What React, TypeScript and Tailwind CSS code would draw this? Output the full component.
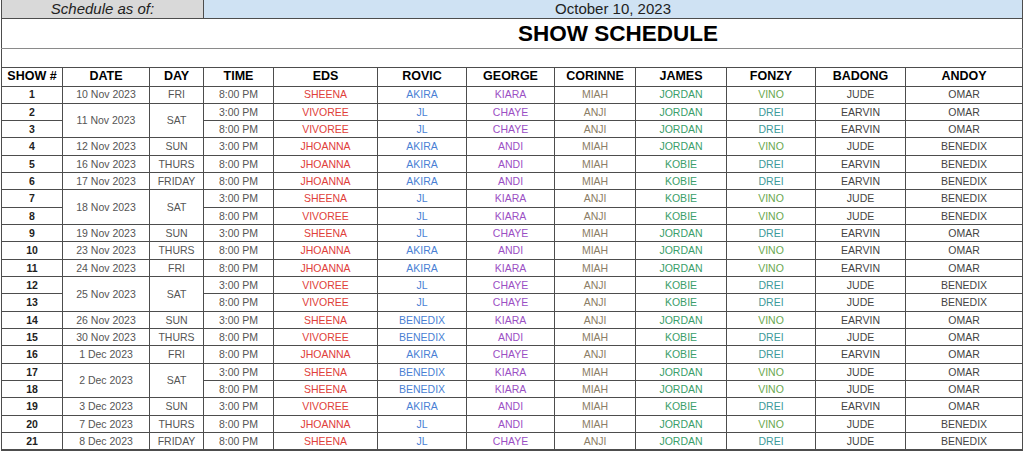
import React from "react";

type Row = {
  n: number;
  date?: string;
  day?: string;
  span?: number;
  time: string;
  eds: string;
  rovic: string;
  george: string;
  corinne: string;
  james: string;
  fonzy: string;
  badong: string;
  andoy: string;
};

const r = (
  n: number,
  date: string | undefined,
  day: string | undefined,
  span: number | undefined,
  time: string,
  eds: string,
  rovic: string,
  george: string,
  corinne: string,
  james: string,
  fonzy: string,
  badong: string,
  andoy: string
): Row => ({ n, date, day, span, time, eds, rovic, george, corinne, james, fonzy, badong, andoy });

const rows: Row[] = [
  r(1, "10 Nov 2023", "FRI", 1, "8:00 PM", "SHEENA", "AKIRA", "KIARA", "MIAH", "JORDAN", "VINO", "JUDE", "OMAR"),
  r(2, "11 Nov 2023", "SAT", 2, "3:00 PM", "VIVOREE", "JL", "CHAYE", "ANJI", "JORDAN", "DREI", "EARVIN", "OMAR"),
  r(3, undefined, undefined, undefined, "8:00 PM", "VIVOREE", "JL", "CHAYE", "ANJI", "JORDAN", "DREI", "EARVIN", "OMAR"),
  r(4, "12 Nov 2023", "SUN", 1, "3:00 PM", "JHOANNA", "AKIRA", "ANDI", "MIAH", "JORDAN", "VINO", "JUDE", "BENEDIX"),
  r(5, "16 Nov 2023", "THURS", 1, "8:00 PM", "JHOANNA", "AKIRA", "ANDI", "MIAH", "KOBIE", "DREI", "EARVIN", "BENEDIX"),
  r(6, "17 Nov 2023", "FRIDAY", 1, "8:00 PM", "JHOANNA", "AKIRA", "ANDI", "MIAH", "KOBIE", "DREI", "EARVIN", "BENEDIX"),
  r(7, "18 Nov 2023", "SAT", 2, "3:00 PM", "SHEENA", "JL", "KIARA", "ANJI", "KOBIE", "VINO", "JUDE", "BENEDIX"),
  r(8, undefined, undefined, undefined, "8:00 PM", "VIVOREE", "JL", "KIARA", "ANJI", "KOBIE", "VINO", "JUDE", "BENEDIX"),
  r(9, "19 Nov 2023", "SUN", 1, "3:00 PM", "SHEENA", "JL", "CHAYE", "MIAH", "JORDAN", "DREI", "EARVIN", "OMAR"),
  r(10, "23 Nov 2023", "THURS", 1, "8:00 PM", "JHOANNA", "AKIRA", "ANDI", "MIAH", "JORDAN", "VINO", "EARVIN", "OMAR"),
  r(11, "24 Nov 2023", "FRI", 1, "8:00 PM", "JHOANNA", "AKIRA", "KIARA", "MIAH", "JORDAN", "VINO", "EARVIN", "OMAR"),
  r(12, "25 Nov 2023", "SAT", 2, "3:00 PM", "VIVOREE", "JL", "CHAYE", "ANJI", "KOBIE", "DREI", "JUDE", "BENEDIX"),
  r(13, undefined, undefined, undefined, "8:00 PM", "VIVOREE", "JL", "CHAYE", "ANJI", "KOBIE", "DREI", "JUDE", "BENEDIX"),
  r(14, "26 Nov 2023", "SUN", 1, "3:00 PM", "SHEENA", "BENEDIX", "KIARA", "ANJI", "JORDAN", "VINO", "EARVIN", "OMAR"),
  r(15, "30 Nov 2023", "THURS", 1, "8:00 PM", "VIVOREE", "BENEDIX", "ANDI", "MIAH", "KOBIE", "DREI", "JUDE", "OMAR"),
  r(16, "1 Dec 2023", "FRI", 1, "8:00 PM", "JHOANNA", "AKIRA", "CHAYE", "ANJI", "KOBIE", "DREI", "EARVIN", "OMAR"),
  r(17, "2 Dec 2023", "SAT", 2, "3:00 PM", "SHEENA", "BENEDIX", "KIARA", "MIAH", "JORDAN", "VINO", "JUDE", "OMAR"),
  r(18, undefined, undefined, undefined, "8:00 PM", "SHEENA", "BENEDIX", "KIARA", "MIAH", "JORDAN", "VINO", "JUDE", "OMAR"),
  r(19, "3 Dec 2023", "SUN", 1, "3:00 PM", "VIVOREE", "AKIRA", "ANDI", "MIAH", "KOBIE", "DREI", "EARVIN", "OMAR"),
  r(20, "7 Dec 2023", "THURS", 1, "8:00 PM", "JHOANNA", "JL", "ANDI", "MIAH", "JORDAN", "VINO", "JUDE", "BENEDIX"),
  r(21, "8 Dec 2023", "FRIDAY", 1, "8:00 PM", "SHEENA", "JL", "CHAYE", "ANJI", "JORDAN", "DREI", "JUDE", "BENEDIX"),
];

const cell = "border border-[#4d4d4d] p-0 text-center align-middle leading-none whitespace-nowrap overflow-hidden";
const data = cell + " text-[10.5px]";
const head = cell + " text-[12.5px] font-bold text-black";

export default function App() {
  return (
    <div className="w-[1024px] h-[451px] overflow-hidden bg-white font-['Liberation_Sans',Arial,sans-serif]">
      <table className="ml-px border-collapse table-fixed w-[1021px] border-b-2 border-[#4d4d4d]">
        <colgroup>
          <col className="w-[61px]" />
          <col className="w-[87px]" />
          <col className="w-[54px]" />
          <col className="w-[70px]" />
          <col className="w-[104px]" />
          <col className="w-[89px]" />
          <col className="w-[88px]" />
          <col className="w-[81px]" />
          <col className="w-[91px]" />
          <col className="w-[89px]" />
          <col className="w-[90px]" />
          <col className="w-[117px]" />
        </colgroup>
        <tbody>
          <tr className="h-[18px]">
            <td colSpan={3} className={cell + " bg-[#d9d9d9] text-[15px] italic text-[#222] border-t-0"}>
              Schedule as of:
            </td>
            <td colSpan={9} className={cell + " bg-[#cfe2f3] text-[15px] text-[#222] border-t-0"}>
              October 10, 2023
            </td>
          </tr>
          <tr className="h-[30px]">
            <td colSpan={12} className={cell + " border-b-[#8a8a8a] text-[22.5px] font-bold text-black pl-[212px] pt-[3px]"}>
              SHOW SCHEDULE
            </td>
          </tr>
          <tr className="h-[19px]">
            <td colSpan={12} className={cell + " border-t-[#8a8a8a]"}></td>
          </tr>
          <tr className="h-[19px]">
            <td className={head}>SHOW #</td>
            <td className={head}>DATE</td>
            <td className={head}>DAY</td>
            <td className={head}>TIME</td>
            <td className={head}>EDS</td>
            <td className={head}>ROVIC</td>
            <td className={head}>GEORGE</td>
            <td className={head}>CORINNE</td>
            <td className={head}>JAMES</td>
            <td className={head}>FONZY</td>
            <td className={head}>BADONG</td>
            <td className={head}>ANDOY</td>
          </tr>
          {rows.map((row) => (
            <tr key={row.n} className="h-[17.33px]">
              <td className={cell + " text-[10.5px] font-bold text-[#222]"}>{row.n}</td>
              {row.date !== undefined && (
                <td rowSpan={row.span} className={data + " text-[#555]"}>
                  {row.date}
                </td>
              )}
              {row.day !== undefined && (
                <td rowSpan={row.span} className={data + " text-[#555]"}>
                  {row.day}
                </td>
              )}
              <td className={data + " text-[#555]"}>{row.time}</td>
              <td className={data + " text-[#e0403a]"}>{row.eds}</td>
              <td className={data + " text-[#4a7fd4]"}>{row.rovic}</td>
              <td className={data + " text-[#9b4fc4]"}>{row.george}</td>
              <td className={data + " text-[#8b7d65]"}>{row.corinne}</td>
              <td className={data + " text-[#3a9e6a]"}>{row.james}</td>
              <td className={data + (row.fonzy === "VINO" ? " text-[#6aa84f]" : " text-[#3d9a9a]")}>{row.fonzy}</td>
              <td className={data + " text-[#444]"}>{row.badong}</td>
              <td className={data + " text-[#444]"}>{row.andoy}</td>
            </tr>
          ))}
        </tbody>
      </table>
    </div>
  );
}
